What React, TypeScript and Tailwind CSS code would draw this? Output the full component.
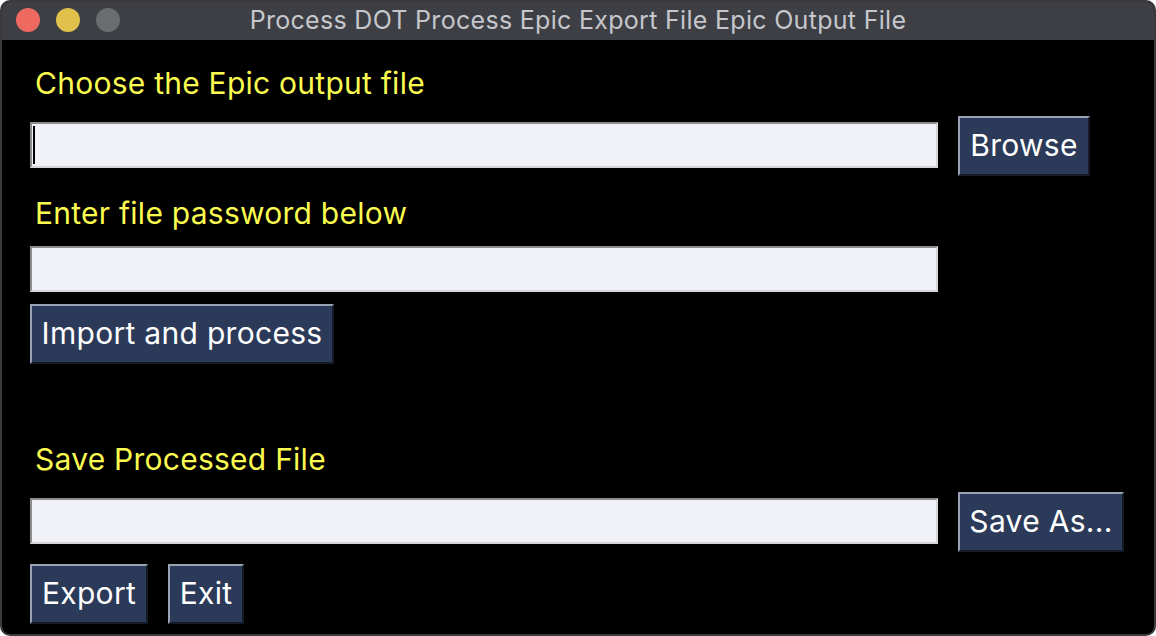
const FONT = { fontFamily: 'Inter, "Liberation Sans", sans-serif' };

function Field({ caret = false }: { caret?: boolean }) {
  return (
    <div className="flex h-[46px] w-[908px] items-center border-2 border-t-[#8e8e8e] border-l-[#8e8e8e] border-b-[#d6d6da] border-r-[#d6d6da] bg-[#f1f2f7]">
      {caret && <span className="ml-px h-[38px] w-[2px] bg-black" />}
    </div>
  );
}

function TkButton({ label, width }: { label: string; width: string }) {
  return (
    <button
      type="button"
      className={`flex h-[60px] ${width} items-center justify-center border-2 border-t-[#9aa2b4] border-l-[#9aa2b4] border-b-[#151a26] border-r-[#151a26] bg-[#2c3a59] pb-[3px] text-[30px] leading-none tracking-[0.3px] text-white`}
    >
      {label}
    </button>
  );
}

function Label({ text, mt }: { text: string; mt: string }) {
  return (
    <div className={`${mt} h-[36px] pl-[5px] text-[30px] leading-[36px] tracking-[0.25px] text-[#fbfb50]`}>
      {text}
    </div>
  );
}

export default function App() {
  return (
    <div className="h-[636px] w-[1156px] bg-white" style={FONT}>
      <div className="flex h-full w-full flex-col overflow-hidden rounded-[10px] border-2 border-[#3b3b3d] bg-black">
        <div className="relative flex h-[38px] shrink-0 items-center justify-center bg-[#3d3f44]">
          <div className="absolute left-[14px] top-[6px] flex gap-[16px]">
            <span className="h-[24px] w-[24px] rounded-full bg-[#ee6a5f]" />
            <span className="h-[24px] w-[24px] rounded-full bg-[#e1c04c]" />
            <span className="h-[24px] w-[24px] rounded-full bg-[#6b6c70]" />
          </div>
          <span className="text-[25px] tracking-[0.3px] text-[#c5c7cc]">
            Process DOT Process Epic Export File Epic Output File
          </span>
        </div>

        <div className="flex flex-col pl-[28px]">
          <Label text="Choose the Epic output file" mt="mt-[25px]" />
          <div className="mt-[15px] flex items-start gap-[20px]">
            <div className="mt-[6px]">
              <Field caret />
            </div>
            <TkButton label="Browse" width="w-[132px]" />
          </div>

          <Label text="Enter file password below" mt="mt-[19px]" />
          <div className="mt-[15px]">
            <Field />
          </div>
          <div className="mt-[12px]">
            <TkButton label="Import and process" width="w-[304px]" />
          </div>

          <Label text="Save Processed File" mt="mt-[77px]" />
          <div className="mt-[15px] flex items-start gap-[20px]">
            <div className="mt-[6px]">
              <Field />
            </div>
            <TkButton label="Save As..." width="w-[166px]" />
          </div>
          <div className="mt-[12px] flex gap-[20px]">
            <TkButton label="Export" width="w-[118px]" />
            <TkButton label="Exit" width="w-[76px]" />
          </div>
        </div>
      </div>
    </div>
  );
}
